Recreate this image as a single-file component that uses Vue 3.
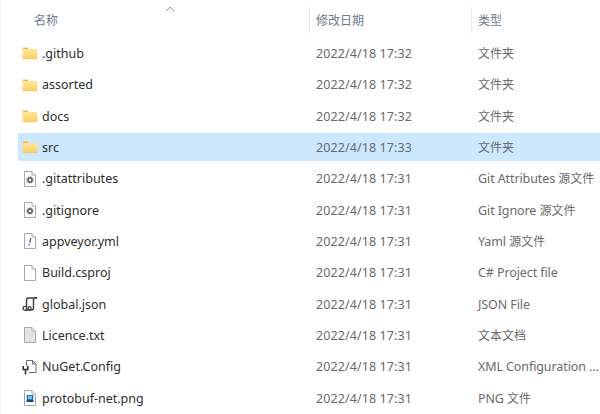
<script setup>
const rows = [
  { name: '.github', date: '2022/4/18 17:32', cjk: '文件夹', icon: 'folder' },
  { name: 'assorted', date: '2022/4/18 17:32', cjk: '文件夹', icon: 'folder' },
  { name: 'docs', date: '2022/4/18 17:32', cjk: '文件夹', icon: 'folder' },
  { name: 'src', date: '2022/4/18 17:33', cjk: '文件夹', icon: 'folder', selected: true },
  { name: '.gitattributes', date: '2022/4/18 17:31', type: 'Git Attributes ', cjk: '源文件', icon: 'gear' },
  { name: '.gitignore', date: '2022/4/18 17:31', type: 'Git Ignore ', cjk: '源文件', icon: 'gear' },
  { name: 'appveyor.yml', date: '2022/4/18 17:31', type: 'Yaml ', cjk: '源文件', icon: 'yaml' },
  { name: 'Build.csproj', date: '2022/4/18 17:31', type: 'C# Project file', icon: 'blank' },
  { name: 'global.json', date: '2022/4/18 17:31', type: 'JSON File', icon: 'script' },
  { name: 'Licence.txt', date: '2022/4/18 17:31', cjk: '文本文档', icon: 'text' },
  { name: 'NuGet.Config', date: '2022/4/18 17:31', type: 'XML Configuration ...', icon: 'config' },
  { name: 'protobuf-net.png', date: '2022/4/18 17:31', type: 'PNG ', cjk: '文件', icon: 'image' },
]
</script>

<template>
  <div class="explorer">
    <div class="header">
      <div class="col-name">名称</div>
      <div class="col-date">修改日期</div>
      <div class="col-type">类型</div>
      <svg class="sort" width="10" height="6" viewBox="0 0 10 6"><path d="M1 5 L5 1 L9 5" fill="none" stroke="#9a9a9a" stroke-width="1" /></svg>
    </div>
    <div class="list">
      <div v-for="r in rows" :key="r.name" class="row" :class="{ selected: r.selected }">
        <div class="name">
          <svg class="icon" width="16" height="16" viewBox="0 0 16 16">
            <defs>
              <linearGradient id="fold" x1="0" y1="0" x2="0" y2="1">
                <stop offset="0" stop-color="#ffe59a" />
                <stop offset="1" stop-color="#fcd064" />
              </linearGradient>
            </defs>
            <template v-if="r.icon === 'folder'">
              <path d="M0.7 3.2 a0.7 0.7 0 0 1 0.7-0.7 H5.5 L7 4 H15 V6 H0.7 Z" fill="#efb94a" />
              <rect x="0.7" y="4" width="14.6" height="10" rx="0.6" fill="url(#fold)" />
              <rect x="0.7" y="13.4" width="14.6" height="0.7" fill="#f2c45c" />
            </template>
            <template v-else-if="r.icon === 'config'">
              <path d="M4.5 7 V1.5 H10.5 L14 5 V13.5 H7" fill="#fff" stroke="#6a6a6a" stroke-width="1" />
              <path d="M10.5 1.5 V5 H14" fill="none" stroke="#6a6a6a" stroke-width="1" />
              <path d="M1.2 7 V10.5 H5.8 V7 M3.5 10.5 V15.5" fill="none" stroke="#333" stroke-width="1.6" />
            </template>
            <template v-else-if="r.icon === 'script'">
              <path d="M4.5 11.5 V4 a2 2 0 0 1 2-2 H15 M15 2 a1.6 1.6 0 0 0-2.8 1" fill="none" stroke="#3c3c3c" stroke-width="1.4" />
              <path d="M11.5 2.5 V12 a2 2 0 0 1-2 2 H2.8" fill="none" stroke="#3c3c3c" stroke-width="1.4" />
              <circle cx="2.9" cy="12.2" r="1.9" fill="#fff" stroke="#3c3c3c" stroke-width="1.3" />
              <circle cx="7.6" cy="12.2" r="1.5" fill="#fff" stroke="#3c3c3c" stroke-width="1.2" />
            </template>
            <template v-else>
              <path d="M2.5 0.5 H10 L13.5 4 V15.5 H2.5 Z" :fill="r.icon === 'text' ? '#e3e3e3' : '#fdfdfd'" stroke="#a8a8a8" stroke-width="1" />
              <path d="M10 0.5 V4 H13.5" fill="#fff" stroke="#a8a8a8" stroke-width="1" />
              <template v-if="r.icon === 'gear'">
                <circle cx="8" cy="9" r="2.1" fill="none" stroke="#56626e" stroke-width="1.7" />
                <circle cx="8" cy="9" r="3.4" fill="none" stroke="#7c8792" stroke-width="0.9" stroke-dasharray="1.3 1.3" />
              </template>
              <path v-else-if="r.icon === 'yaml'" d="M8.8 5 L7.8 9.8 M7.4 11 L7.2 12.5" fill="none" stroke="#8a5cc0" stroke-width="1.5" />
              <template v-else-if="r.icon === 'image'">
                <rect x="4.7" y="5" width="6.6" height="7" fill="#1f6fc4" />
                <rect x="6" y="6" width="4" height="3" fill="#7ec0f0" />
                <rect x="4.7" y="10" width="6.6" height="2" fill="#10497f" />
              </template>
            </template>
          </svg>
          <span class="label">{{ r.name }}</span>
        </div>
        <div class="col-date label">{{ r.date }}</div>
        <div class="col-type label"><span v-if="r.type" class="latin">{{ r.type }}</span><span v-if="r.cjk" class="cjk">{{ r.cjk }}</span></div>
      </div>
    </div>
  </div>
</template>

<style>
html, body { margin: 0; background: #fff; overflow: hidden; }
</style>

<style scoped>
.explorer {
  width: 600px;
  height: 414px;
  overflow: hidden;
  background: #fff;
  font-family: "Noto Sans", "Noto Sans CJK SC", sans-serif;
  font-size: 12.5px;
  color: #6a6a6a;
  border-left: 1px solid #f4f4f4;
  box-sizing: border-box;
}
.header {
  position: relative;
  display: grid;
  grid-template-columns: 291px 162px 1fr;
  margin-left: 17px;
  padding-top: 7px;
  height: 39.25px;
  box-sizing: border-box;
  font-size: 12px;
  color: #6b7a8f;
}
.header > div {
  height: 26px;
  line-height: 28px;
  white-space: nowrap;
}
.header .col-name { padding-left: 16px; }
.header .col-date, .header .col-type { border-left: 1px solid #e8e8e8; box-sizing: border-box; padding-left: 6px; }
.sort { position: absolute; left: 147px; top: 6px; }
.list {
  display: flex;
  flex-direction: column;
  gap: 3.85px;
  margin-left: 17px;
}
.row {
  display: grid;
  grid-template-columns: 291px 162px 1fr;
  height: 27.5px;
  white-space: pre;
  box-sizing: border-box;
  align-items: center;
}
.row.selected { background: #cce8ff; }
.name {
  display: flex;
  align-items: center;
  gap: 4px;
  padding-left: 4px;
  color: #2e2e2e;
}
.label { line-height: 27.5px; padding-top: 0.6px; }
.icon { flex: none; }
.row .col-date, .row .col-type { padding-left: 7px; }
.row .col-date { letter-spacing: 0.1px; }
.latin { letter-spacing: -0.1px; }
.cjk { font-size: 12px; }
</style>
